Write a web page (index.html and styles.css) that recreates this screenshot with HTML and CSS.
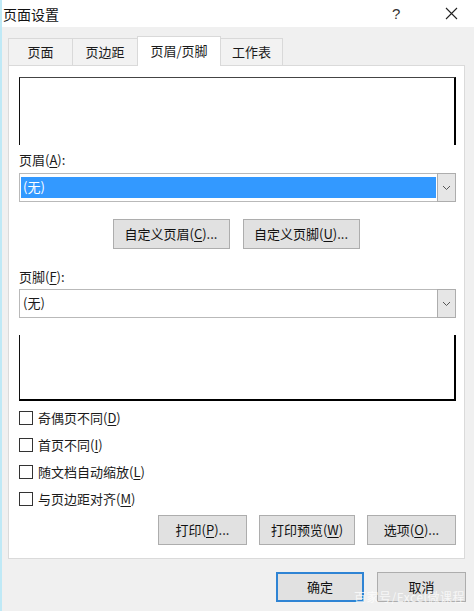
FILE: index.html
```html
<!DOCTYPE html>
<html lang="zh-CN">
    <head>
        <meta charset="utf-8">
        <title>页面设置</title>
        <link rel="stylesheet" href="styles.css">
    </head>
    <body>
        <div class="window">
            <div class="titlebar">
                <span class="title">页面设置</span>
                <span class="help">?</span>
                <span class="close">
                    <svg width="13" height="13" viewBox="0 0 13 13"><path d="M1 1L12 12M12 1L1 12" stroke="#222" stroke-width="1.1" fill="none"/></svg>
                </span>
            </div>

            <div class="tabs">
                <div class="tab t1">页面</div>
                <div class="tab t2">页边距</div>
                <div class="tab t3 active">页眉/页脚</div>
                <div class="tab t4">工作表</div>
            </div>

            <div class="panel">
                <div class="preview head"></div>

                <div class="label">页眉(<u>A</u>):</div>
                <div class="select">
                    <div class="value selected">(无)</div>
                    <div class="arrow"><svg width="9" height="6" viewBox="0 0 9 6"><path d="M1 1L4.5 4.5L8 1" stroke="#555" stroke-width="1" fill="none"/></svg></div>
                </div>

                <div class="custom">
                    <div class="btn wide">自定义页眉(<u>C</u>)...</div>
                    <div class="btn wide">自定义页脚(<u>U</u>)...</div>
                </div>

                <div class="label foot-label">页脚(<u>F</u>):</div>
                <div class="select">
                    <div class="value plain">(无)</div>
                    <div class="arrow"><svg width="9" height="6" viewBox="0 0 9 6"><path d="M1 1L4.5 4.5L8 1" stroke="#555" stroke-width="1" fill="none"/></svg></div>
                </div>

                <div class="preview foot"></div>

                <div class="checks">
                    <div class="check"><span class="box"></span>奇偶页不同(<u>D</u>)</div>
                    <div class="check"><span class="box"></span>首页不同(<u>I</u>)</div>
                    <div class="check"><span class="box"></span>随文档自动缩放(<u>L</u>)</div>
                    <div class="check"><span class="box"></span>与页边距对齐(<u>M</u>)</div>
                </div>

                <div class="actions">
                    <div class="btn w89">打印(<u>P</u>)...</div>
                    <div class="btn w96">打印预览(<u>W</u>)</div>
                    <div class="btn w89">选项(<u>O</u>)...</div>
                </div>
            </div>

            <div class="bottom">
                <div class="btn ok">确定</div>
                <div class="btn cancel">取消</div>
            </div>

            <div class="watermark">百家号/Excel微课程</div>
        </div>
    </body>
</html>
```

FILE: styles.css
```css
* {
    box-sizing: border-box;
}

body {
    margin: 0;
    padding: 0;
    background-color: #f0f0f0;
    color: #1a1a1a;
    font-family: "Noto Sans CJK SC", "Microsoft YaHei", sans-serif;
    font-size: 13px;
}

u {
    text-decoration: underline;
    text-underline-offset: 2px;
}

.window {
    position: relative;
    width: 474px;
    height: 611px;
    border-left: 2px solid #bfe9f6;
    background-color: #f0f0f0;
    overflow: hidden;
}

/* title bar */
.titlebar {
    display: flex;
    align-items: center;
    height: 27px;
    background-color: #ffffff;
}

.title {
    padding-left: 1px;
    font-size: 14px;
    color: #111;
}

.help {
    margin-left: 333px;
    font-size: 15px;
    color: #333;
    font-family: "Liberation Sans", sans-serif;
}

.close {
    display: flex;
    margin-left: 45px;
}

/* tabs */
.tabs {
    display: flex;
    align-items: flex-end;
    height: 29px;
    margin: 9px 0 0 6px;
}

.tab {
    height: 27px;
    line-height: 26px;
    text-align: center;
    background-color: #f2f2f2;
    border: 1px solid #d9d9d9;
    border-bottom: none;
    margin-left: -1px;
    color: #1a1a1a;
}

.tab.t1 { width: 65px; margin-left: 0; }
.tab.t2 { width: 66px; }
.tab.t3 { width: 84px; }
.tab.t4 { width: 63px; }

.tab.active {
    position: relative;
    height: 30px;
    line-height: 28px;
    margin-bottom: -1px;
    background-color: #ffffff;
    z-index: 1;
}

/* main panel */
.panel {
    width: 457px;
    margin-left: 6px;
    padding: 11px 8px 13px 10px;
    background-color: #ffffff;
    border: 1px solid #dadada;
}

.preview {
    height: 68px;
    border-left: 1px solid #111;
    border-right: 2px solid #000;
}

.preview.head {
    border-top: 1px solid #444;
}

.preview.foot {
    height: 66px;
    margin-top: 17px;
    border-bottom: 2px solid #000;
}

.label {
    margin-top: 6px;
    height: 18px;
    line-height: 18px;
}

.foot-label {
    margin-top: 19px;
}

.select {
    display: flex;
    height: 29px;
    margin-top: 4px;
    border: 1px solid #b9b9b9;
    background-color: #ffffff;
}

.foot-label + .select {
    margin-top: 3px;
}

.value {
    flex: 1;
    line-height: 19px;
    padding-left: 2px;
}

.value.selected {
    margin: 3px 1px 3px 1px;
    background-color: #3399ff;
    color: #ffffff;
}

.value.plain {
    margin: 3px 1px;
}

.arrow {
    display: flex;
    align-items: center;
    justify-content: center;
    width: 19px;
    background-color: #e6e6e6;
    border: 1px solid #adadad;
    margin: -1px -1px -1px 0;
}

/* buttons */
.btn {
    height: 30px;
    line-height: 28px;
    text-align: center;
    background-color: #e1e1e1;
    border: 1px solid #adadad;
    color: #111;
}

.custom {
    display: flex;
    justify-content: center;
    gap: 13px;
    margin-top: 17px;
    padding-right: 3px;
}

.btn.wide {
    width: 117px;
}

.checks {
    margin-top: 3px;
}

.check {
    display: flex;
    align-items: center;
    height: 27px;
}

.box {
    width: 14px;
    height: 14px;
    margin-right: 5px;
    border: 1px solid #333;
    background-color: #ffffff;
}

.actions {
    display: flex;
    justify-content: flex-end;
    gap: 12px;
    margin-top: 3px;
}

.btn.w89 { width: 89px; }
.btn.w96 { width: 96px; }

.bottom {
    display: flex;
    justify-content: flex-end;
    gap: 13px;
    margin-top: 13px;
    padding-right: 8px;
}

.btn.ok {
    width: 88px;
    border: 2px solid #2f84d4;
    line-height: 26px;
}

.btn.cancel {
    width: 89px;
}

.watermark {
    position: absolute;
    left: 352px;
    top: 590px;
    font-size: 12px;
    line-height: 14px;
    color: rgba(255, 255, 255, 0.75);
    letter-spacing: 0.5px;
}
```
